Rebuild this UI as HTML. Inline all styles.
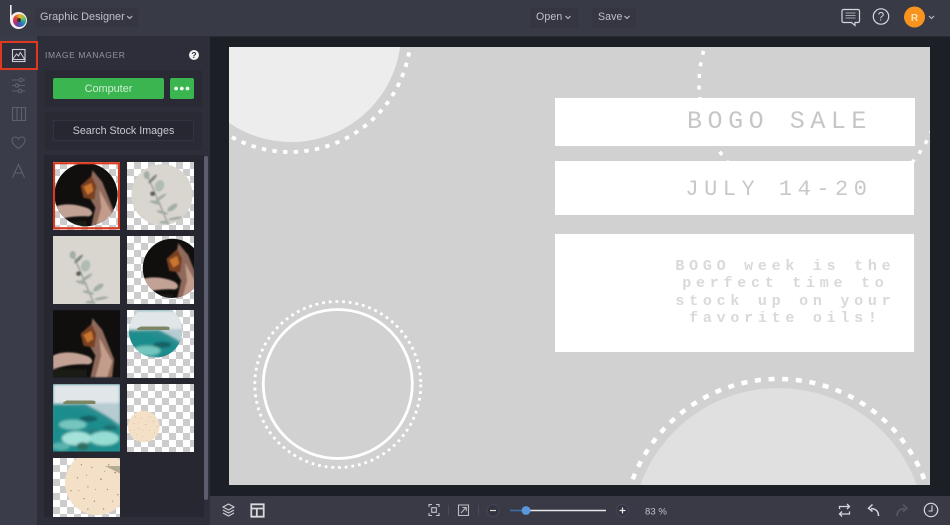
<!DOCTYPE html>
<html><head><meta charset="utf-8"><style>
html,body{margin:0;padding:0;width:950px;height:525px;overflow:hidden;background:#1c1f26;font-family:"Liberation Sans",sans-serif}
.a{position:absolute}
.t{position:absolute;white-space:nowrap}
.thumb{position:absolute;width:67px;height:67.5px;overflow:hidden}
.ck{background-color:#fff;background-image:linear-gradient(45deg,#ccc 25%,transparent 25%,transparent 75%,#ccc 75%),linear-gradient(45deg,#ccc 25%,transparent 25%,transparent 75%,#ccc 75%);background-size:14px 14px;background-position:0 0,7px 7px}
.thumb svg{position:absolute;left:0;top:0;width:100%;height:100%}
.m{font-family:"Liberation Mono",monospace;position:absolute;white-space:nowrap}
</style></head><body>
<svg width="0" height="0" style="position:absolute"><defs>
<filter id="b1"><feGaussianBlur stdDeviation=".8"/></filter>
<filter id="b2"><feGaussianBlur stdDeviation="1.4"/></filter>
<g id="hand"><rect x="0" y="0" width="68" height="68" fill="#100f0e"/>
<g filter="url(#b1)"><path d="M40 8L50 20L62 50L60 68H38L43 46L36 34Z" fill="#8f6a5c"/><path d="M0 46C10 41 24 42 36 47C41 50 41 54 36 55C24 54 10 56 0 60Z" fill="#c2a294"/><path d="M28 24L39 14L44 24L42 38L31 36Z" fill="#7a3f22"/><path d="M31 25l8-4 2 8-6 4z" fill="#c8752f"/><path d="M0 60H34V68H0Z" fill="#1d1a17"/><path d="M47 28L60 52L55 68H43L49 46Z" fill="#c39c8b"/></g></g>
<g id="plant"><rect x="0" y="0" width="68" height="68" fill="#d9d5cf"/>
<g fill="#a3ada5" filter="url(#b1)"><path d="M21 14L44 68" stroke="#939a91" stroke-width="1.2" fill="none"/><ellipse cx="20" cy="13" rx="3" ry="4"/><ellipse cx="33" cy="24" rx="4.500" ry="6" transform="rotate(20 33 24)" fill="#aebcb2"/><ellipse cx="26" cy="17" rx="6" ry="1.500" transform="rotate(-45 26 17)" fill="#7f8780"/><ellipse cx="26" cy="32" rx="2.500" ry="2.300" fill="#5f6259"/><ellipse cx="34" cy="36" rx="7" ry="1.500" transform="rotate(-35 34 36)"/><ellipse cx="29" cy="41" rx="6" ry="1.500" transform="rotate(15 29 41)"/><ellipse cx="46" cy="46" rx="6" ry="2.500" transform="rotate(-35 46 46)"/><ellipse cx="36" cy="51" rx="6" ry="1.500" transform="rotate(15 36 51)"/><ellipse cx="49" cy="57" rx="7" ry="1.500" transform="rotate(-10 49 57)"/><ellipse cx="38" cy="61" rx="5" ry="1.500"/></g></g>
<g id="sea"><rect x="0" y="0" width="68" height="68" fill="#2a8d8e"/>
<g filter="url(#b2)"><rect x="0" y="0" width="68" height="20" fill="#e1e6e9"/><path d="M30 19H68V42C55 32 44 26 30 19Z" fill="#b7cbd2"/><path d="M0 22C20 20 45 30 68 46V68H0Z" fill="#1c8d8d"/><ellipse cx="20" cy="41" rx="14" ry="5" fill="#75c6be"/><ellipse cx="52" cy="55" rx="15" ry="7" fill="#97ddd4"/><ellipse cx="24" cy="55" rx="15" ry="7" fill="#a5e2da"/><ellipse cx="8" cy="63" rx="9" ry="4" fill="#57b2ac"/><ellipse cx="36" cy="35" rx="9" ry="3" fill="#165f63"/><ellipse cx="30" cy="63" rx="6" ry="4" fill="#2f6d5e"/><ellipse cx="58" cy="44" rx="7" ry="2.500" fill="#1e6d70"/><ellipse cx="40" cy="47" rx="6" ry="2.500" fill="#27807f"/></g>
<path d="M10 18.500L14 16.500H40L43 17V20H11Z" fill="#7d8664"/></g>
<g id="oil" fill="#9c8468"><circle cx="8" cy="5" r=".5"/><circle cx="-10" cy="12" r=".5"/><circle cx="14" cy="-8" r=".6"/><circle cx="-4" cy="-12" r=".5"/><circle cx="-15" cy="-4" r=".5"/><circle cx="3" cy="-3" r=".6"/><circle cx="-7" cy="3" r=".5"/><circle cx="16" cy="9" r=".5"/><circle cx="-2" cy="14" r=".5"/><circle cx="9" cy="-14" r=".5"/><circle cx="-12" cy="-14" r=".5"/><circle cx="20" cy="0" r=".5"/><circle cx="-20" cy="6" r=".5"/><circle cx="5" cy="20" r=".5"/><circle cx="-7" cy="20" r=".5"/><circle cx="12" cy="14" r=".4"/><circle cx="-14" cy="6" r=".4"/><circle cx="-1" cy="5" r=".4"/><circle cx="6" cy="-9" r=".4"/><circle cx="-8" cy="-6" r=".4"/></g>
<clipPath id="cv"><rect x="229" y="47" width="701" height="438"/></clipPath>
</defs></svg>

<!-- top bar -->
<div class="a" style="left:0;top:0;width:950px;height:36px;background:#383a45;box-shadow:0 1px 0 #2a2b33"></div>
<div class="a" style="left:35px;top:8px;width:103px;height:19px;background:#353641;border-radius:2px"></div>
<div class="t" style="left:40px;top:10px;font-size:10.9px;color:#bfc0c6;line-height:15px">Graphic Designer</div>
<div class="a" style="left:530px;top:8px;width:48px;height:20px;background:#353641"></div>
<div class="a" style="left:592px;top:8px;width:44px;height:20px;background:#353641"></div>
<div class="t" style="left:536px;top:10px;font-size:10.6px;letter-spacing:.1px;color:#bfc0c6;line-height:15px">Open</div>
<div class="t" style="left:598px;top:10px;font-size:10.6px;letter-spacing:.1px;color:#bfc0c6;line-height:15px">Save</div>

<!-- logo -->
<div class="a" style="left:10px;top:12px;width:17px;height:17px;border-radius:50%;background:#f4eef1"></div>
<div class="a" style="left:12.5px;top:13.5px;width:13px;height:13px;border-radius:50%;background:conic-gradient(#f0b030,#8bc34a,#2aa89a,#2b6fc0,#6a3fa0,#c0306a,#e04a30,#f0b030)"></div>
<div class="a" style="left:17px;top:18px;width:4px;height:4px;border-radius:50%;background:#3a3226"></div>

<!-- left rail -->
<div class="a" style="left:0;top:36px;width:37px;height:489px;background:#3a3c49"></div>
<div class="a" style="left:37px;top:36px;width:173px;height:489px;background:#2d2e39"></div>
<div class="a" style="left:0;top:41px;width:33.5px;height:25px;background:#2d2e39;border:2.5px solid #df3a1f"></div>

<!-- panel -->
<div class="t" style="left:45px;top:50px;font-size:8.5px;letter-spacing:.6px;color:#92949f;line-height:11px">IMAGE MANAGER</div>
<div class="a" style="left:189px;top:50px;width:10px;height:10px;border-radius:50%;background:#f2f2f2;color:#2d2e39;font-size:8.5px;font-weight:bold;line-height:10px;text-align:center">?</div>
<div class="a" style="left:45px;top:70px;width:157px;height:37px;background:#292a34"></div>
<div class="a" style="left:45px;top:112px;width:157px;height:38px;background:#292a34"></div>
<div class="a" style="left:53px;top:78px;width:111px;height:21px;background:#3bb54f;border-radius:2px;color:#cdeed3;font-size:10.9px;line-height:22px;text-align:center">Computer</div>
<div class="a" style="left:169.5px;top:78px;width:24.5px;height:21px;background:#3bb54f;border-radius:2px"></div>
<div class="a" style="left:53px;top:120px;width:139px;height:19px;background:#262730;border:1px solid #32333e;color:#c9cad0;font-size:10.7px;line-height:20px;text-align:center">Search Stock Images</div>
<div class="a" style="left:44px;top:155px;width:160px;height:362px;background:#262730"></div>
<div class="a" style="left:204px;top:156px;width:4px;height:344px;background:#5c5e70;border-radius:2px"></div>

<!-- thumbs -->
<div class="thumb ck" style="left:53px;top:162px"><svg viewBox="0 0 68 68"><clipPath id="c1"><circle cx="33.500" cy="33" r="32"/></clipPath><g clip-path="url(#c1)"><use href="#hand"/></g><rect x="1" y="1" width="66" height="66" fill="none" stroke="#d93a1e" stroke-width="2.200"/></svg></div>
<div class="thumb ck" style="left:127px;top:162px"><svg viewBox="0 0 68 68"><clipPath id="c2"><circle cx="35.500" cy="33" r="31"/></clipPath><g clip-path="url(#c2)"><use href="#plant"/></g></svg></div>
<div class="thumb" style="left:53px;top:236px;background:#d9d5cf"><svg viewBox="0 0 68 68"><g transform="translate(0,6)"><use href="#plant"/></g></svg></div>
<div class="thumb ck" style="left:127px;top:236px"><svg viewBox="0 0 68 68"><clipPath id="c3"><circle cx="46" cy="32.500" r="30"/></clipPath><g clip-path="url(#c3)"><g transform="translate(12,-1)"><use href="#hand"/></g></g></svg></div>
<div class="thumb" style="left:53px;top:310px"><svg viewBox="0 0 68 68"><use href="#hand"/></svg></div>
<div class="thumb ck" style="left:127px;top:310px"><svg viewBox="0 0 68 68"><clipPath id="c4"><circle cx="29" cy="21" r="27"/></clipPath><g clip-path="url(#c4)"><use href="#sea"/></g></svg></div>
<div class="thumb" style="left:53px;top:384px"><svg viewBox="0 0 68 68"><use href="#sea"/></svg></div>
<div class="thumb ck" style="left:127px;top:384px"><svg viewBox="0 0 68 68"><circle cx="17" cy="43" r="16" fill="#f4e0c6"/><g transform="translate(17,43) scale(.7)"><use href="#oil"/></g></svg></div>
<div class="thumb ck" style="left:53px;top:458px;height:59px"><svg viewBox="0 0 68 59" preserveAspectRatio="xMinYMin slice"><circle cx="44" cy="25" r="32" fill="#f4e0c6"/><g transform="translate(44,25) scale(1.300)"><use href="#oil"/></g><path d="M52 8h16v8z" fill="#b5aa92"/></svg></div>

<!-- bottom bar -->
<div class="a" style="left:210px;top:496px;width:740px;height:29px;background:#393a46"></div>

<!-- canvas -->
<div class="a" style="left:229px;top:47px;width:701px;height:438px;background:#d1d1d1"></div>
<svg class="a" style="left:0;top:0" width="950" height="525" viewBox="0 0 950 525">
<g clip-path="url(#cv)" fill="none">
<path d="M229 122.800A110 110 0 0 0 400.100 47L229 47Z" fill="#ededed"/>
<circle cx="290" cy="31" r="121" stroke="#fff" stroke-width="3.800" stroke-dasharray="4.400 6.300"/>
<path d="M640.300 485A147 147 0 0 1 916.700 485Z" fill="#e0e0e0"/>
<path d="M630.700 485A156 156 0 0 1 926.300 485" stroke="#fff" stroke-width="4.500" stroke-dasharray="6 7.700" stroke-dashoffset="-6.100"/>
<circle cx="337.800" cy="384" r="74.500" stroke="#fff" stroke-width="2.800"/>
<circle cx="337.800" cy="384.500" r="83" stroke="#fff" stroke-width="2.800" stroke-dasharray="2.800 3.900"/>
<circle cx="820" cy="84" r="121" stroke="#fff" stroke-width="3.500" stroke-dasharray="4 7.700"/>
</g>
</svg>
<div class="a" style="left:555px;top:98px;width:359.5px;height:48px;background:#fff"></div>
<div class="a" style="left:555px;top:161px;width:359px;height:54px;background:#fff"></div>
<div class="a" style="left:555px;top:234px;width:359px;height:118px;background:#fff"></div>
<div class="m" style="left:687px;top:108px;font-size:25px;line-height:28px;letter-spacing:5.55px;color:#c6c6c6">BOGO SALE</div>
<div class="m" style="left:685.4px;top:176px;font-size:22px;line-height:28px;letter-spacing:5.5px;color:#c8c8c8">JULY 14-20</div>
<div class="m" style="left:585.4px;top:257.5px;width:400px;text-align:center;font-size:15px;line-height:17.5px;letter-spacing:4.75px;font-weight:bold;color:#d9d9d9">BOGO week is the<br>perfect time to<br>stock up on your<br>favorite oils!</div>

<!-- icons -->
<svg class="a" style="left:0;top:0" width="950" height="525" viewBox="0 0 950 525" fill="none">
<!-- logo stem -->
<path d="M10.800 5V21" stroke="#f4f0f2" stroke-width="1.600"/>
<!-- more dots -->
<g fill="#eef9f0"><circle cx="176.100" cy="88.500" r="1.900"/><circle cx="181.800" cy="88.500" r="1.900"/><circle cx="187.500" cy="88.500" r="1.900"/></g>
<!-- chevrons -->
<g stroke="#bfc0c6" stroke-width="1.100"><path d="M127.200 16l2.500 2.500 2.500-2.500"/><path d="M565.500 16l2.500 2.500 2.500-2.500"/><path d="M624.500 16l2.500 2.500 2.500-2.500"/><path d="M929 16l2.500 2.500 2.500-2.500"/></g>
<!-- chat -->
<path d="M843.500 9.500h14.500a1.500 1.500 0 0 1 1.500 1.500v10a1.500 1.500 0 0 1-1.500 1.500h-3v3l-3.500-3h-8a1.500 1.500 0 0 1-1.500-1.500V11a1.500 1.500 0 0 1 1.500-1.500z" stroke="#d5d6da" stroke-width="1.200"/>
<path d="M845.500 13h10M845.500 15.500h10M845.500 18h10" stroke="#a5a6ad" stroke-width="1"/>
<!-- help -->
<circle cx="881" cy="16.500" r="7.700" stroke="#d8d9dd" stroke-width="1.200"/>
<text x="881" y="20.600" font-family="Liberation Sans" font-size="11.500" fill="#d8d9dd" text-anchor="middle">?</text>
<!-- avatar -->
<circle cx="914.500" cy="17" r="10.500" fill="#f7931e"/>
<text x="914.500" y="20.800" font-family="Liberation Sans" font-size="10" font-weight="bold" fill="#fde3b8" text-anchor="middle">R</text>
<!-- rail: image -->
<rect x="12.500" y="49.500" width="12.500" height="12" stroke="#cfd0d5" stroke-width="1.100"/>
<path d="M13 59l3.500-5 2 2 1.800-3.500 4.200 6.500M12.500 59.500h12.500" stroke="#cfd0d5" stroke-width="1"/>
<!-- sliders -->
<g stroke="#5e606f" stroke-width="1.100"><path d="M12 80h13M12 85.500h13M12 91h13"/><circle cx="21" cy="80" r="1.700" fill="#3a3c49"/><circle cx="17" cy="85.500" r="1.700" fill="#3a3c49"/><circle cx="20" cy="91" r="1.700" fill="#3a3c49"/></g>
<!-- columns -->
<path d="M12.500 107.500h13v13h-13zM17 107.500v13M21.500 107.500v13" stroke="#5e606f" stroke-width="1.100"/>
<!-- heart -->
<path d="M18.500 148.500c-3-2.400-6.500-5-6.500-8.200 0-2 1.500-3.300 3.200-3.300 1.400 0 2.600.8 3.300 2 .7-1.200 1.900-2 3.300-2 1.700 0 3.200 1.300 3.200 3.300 0 3.200-3.500 5.800-6.500 8.200z" stroke="#5e606f" stroke-width="1.100"/>
<!-- A -->
<path d="M12.500 177.500L18.500 164.500 24.500 177.500M14.700 173h7.600" stroke="#5e606f" stroke-width="1.100"/>
<!-- layers -->
<g stroke="#d0d1d5" stroke-width="1.100"><path d="M228.500 504l5.500 3-5.500 3-5.500-3z"/><path d="M223 510l5.500 3 5.500-3"/><path d="M223 513l5.500 3 5.500-3"/></g>
<!-- template -->
<path d="M251.300 504.300h12.400v12.400h-12.400zM251.300 508.500h12.400M256.800 508.500v8" stroke="#d8d9dd" stroke-width="1.800"/>
<!-- focus -->
<path d="M429 507v-2.500h3M436 504.500h3v2.500M439 513v2.500h-3M432 515.500h-3v-2.500" stroke="#c5c6cb" stroke-width="1.100"/>
<rect x="431.700" y="507.700" width="4.600" height="4.600" stroke="#c5c6cb" stroke-width="1.100"/>
<path d="M448.500 505v10M478.500 505v10" stroke="#4a4b58"/>
<!-- expand -->
<path d="M458.500 505h10v10.500h-10z" stroke="#bdbec4" stroke-width="1.100"/>
<path d="M461 513l5-5.500M462.500 507.500h3.800v3.800" stroke="#bdbec4" stroke-width="1"/>
<!-- zoom -->
<circle cx="493" cy="510.500" r="6" fill="#33343f" stroke="#45465a"/>
<path d="M490 510.500h6" stroke="#d8d9dd" stroke-width="1.200"/>
<path d="M510 510.500h16" stroke="#3f6ea3" stroke-width="1.600"/>
<path d="M526 510.500h80" stroke="#e8e8ea" stroke-width="1.600"/>
<circle cx="526" cy="510.500" r="4.400" fill="#5b97dc"/>
<circle cx="622.500" cy="510.500" r="6" fill="#33343f" stroke="#45465a"/>
<path d="M619.500 510.500h6M622.500 507.500v6" stroke="#e8e8ea" stroke-width="1.200"/>
<text x="645" y="514.300" font-family="Liberation Sans" font-size="9.600" fill="#bfc0c6">83 %</text>
<!-- repeat -->
<g stroke="#d5d6da" stroke-width="1.300"><path d="M839.500 509v-2.500h9.500M847 504l2.500 2.500-2.500 2.500"/><path d="M849.500 511.500v2.500h-9.500M842 511.500l-2.500 2.500 2.500 2.500"/></g>
<!-- undo -->
<path d="M878.500 516c0-4.500-2-7-7.500-7.500M872.500 504.500l-4 3.700 4 3.300" stroke="#d5d6da" stroke-width="1.500"/>
<!-- redo -->
<path d="M897 516c0-4.500 2-7 7.500-7.500M903 504.500l4 3.700-4 3.300" stroke="#5a5b67" stroke-width="1.500"/>
<!-- clock -->
<circle cx="931" cy="510" r="6.700" stroke="#d8d9dd" stroke-width="1.200"/>
<path d="M932 505.500v5.500h-3.500" stroke="#d8d9dd" stroke-width="1.100"/>
</svg>
</body></html>
